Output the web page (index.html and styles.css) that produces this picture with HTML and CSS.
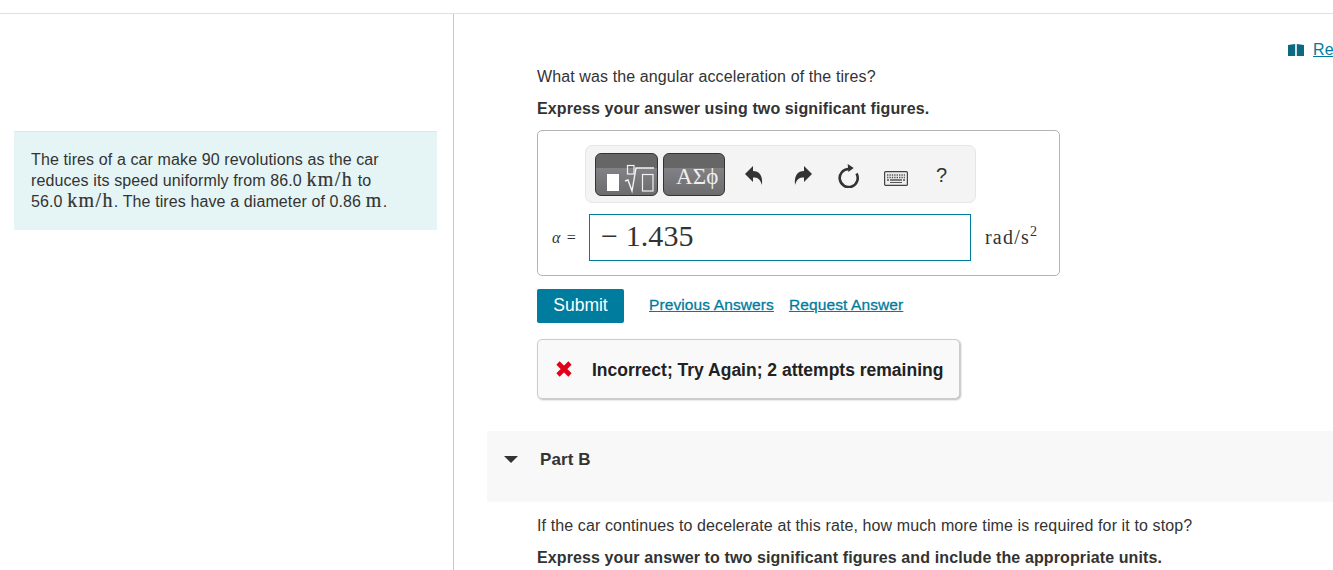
FILE: index.html
```html
<!DOCTYPE html>
<html>
<head>
    <title>Part A</title>
    <link rel="stylesheet" href="styles.css">
</head>
<body>
    <div class="page">
        <div class="left-col">
            <div class="statement">
                The tires of a car make 90 revolutions as the car<br>
                reduces its speed uniformly from 86.0 <span class="unit">km/h</span> to<br>
                56.0 <span class="unit">km/h</span>. The tires have a diameter of 0.86 <span class="unit">m</span>.
            </div>
        </div>
        <div class="right-col">
            <div class="review-row">
                <svg class="book" width="16" height="12" viewBox="0 0 16 12"><path d="M0 1l7.200-1v12H0zM8.800 0L16 1v11H8.800z" fill="#0b6a80"/></svg>
                <a class="review-link" href="#">Re</a>
            </div>
            <div class="part">
                <p class="question">What was the angular acceleration of the tires?</p>
                <p class="instruction">Express your answer using two significant figures.</p>

                <div class="answer-box">
                    <div class="toolbar">
                        <div class="tool-btn tool-templates">
                            <svg width="61" height="42" viewBox="0 0 61 42">
                                <rect x="11" y="20" width="12" height="17" fill="#fff"/>
                                <rect x="31.500" y="11.500" width="6.500" height="8.500" fill="none" stroke="#f2f2f2" stroke-width="1.200"/>
                                <path d="M29 27l3-1 4 11 4-23h18" fill="none" stroke="#f2f2f2" stroke-width="1.400"/>
                                <rect x="46.500" y="20.500" width="10.500" height="16.500" fill="none" stroke="#f2f2f2" stroke-width="1.200"/>
                            </svg>
                        </div>
                        <div class="tool-btn tool-greek">ΑΣϕ</div>
                        <svg class="icon icon-undo" width="18" height="19" viewBox="0 0 18 19"><path d="M0 8l8-8v5c6 0 10 4 9 14-2-6-4-7.500-9-7.500V16z" fill="#333"/></svg>
                        <svg class="icon icon-redo" width="18" height="19" viewBox="0 0 18 19"><path d="M18 8l-8-8v5c-6 0-10 4-9 14 2-6 4-7.500 9-7.500V16z" fill="#333"/></svg>
                        <svg class="icon icon-reset" width="22" height="24" viewBox="0 0 22 24"><path d="M10.700 5A9 9 0 1 0 18.500 9.500" fill="none" stroke="#333" stroke-width="2.600"/><path d="M9.700 0l6 4-5.400 4z" fill="#333"/></svg>
                        <svg class="icon icon-keyboard" width="24" height="15" viewBox="0 0 24 15">
                            <rect x=".6" y=".6" width="22.800" height="13.800" rx="1" fill="#eee" stroke="#444" stroke-width="1.200"/>
                            <path d="M3 4h18M3 6.500h18" stroke="#555" stroke-width="1.400" stroke-dasharray="1.400 1"/>
                            <path d="M3 9h2M6 9h12M19 9h2" stroke="#555" stroke-width="1.400"/>
                            <path d="M6 11.500h12" stroke="#555" stroke-width="1"/>
                        </svg>
                        <span class="tool-help">?</span>
                    </div>
                    <div class="answer-row">
                        <span class="answer-label"><i>α</i> =</span>
                        <div class="answer-input">− 1.435</div>
                        <span class="answer-unit">rad/s<sup>2</sup></span>
                    </div>
                </div>

                <div class="actions">
                    <button class="submit">Submit</button>
                    <a class="action-link first" href="#">Previous Answers</a>
                    <a class="action-link" href="#">Request Answer</a>
                </div>

                <div class="feedback">
                    <svg width="18" height="18" viewBox="0 0 18 18"><path d="M3 3l12 12M15 3L3 15" stroke="#e2001a" stroke-width="4.600"/></svg>
                    <span class="feedback-text">Incorrect; Try Again; 2 attempts remaining</span>
                </div>
            </div>

            <div class="part-bar">
                <span class="caret"></span>
                <span class="part-title">Part B</span>
            </div>

            <div class="part part-b">
                <p class="question">If the car continues to decelerate at this rate, how much more time is required for it to stop?</p>
                <p class="instruction">Express your answer to two significant figures and include the appropriate units.</p>
            </div>
        </div>
    </div>
</body>
</html>
```

FILE: styles.css
```css
html, body {
    margin: 0;
    height: 570px;
    overflow: hidden;
    background-color: white;
}
body {
    font-family: "Liberation Sans", Arial, sans-serif;
    font-size: 16px;
    letter-spacing: 0.11px;
    color: #333;
}
.page {
    display: flex;
    margin-top: 13px;
    border-top: 1px solid #e0e0e0;
    height: 556px;
}
.left-col {
    width: 454px;
    flex-shrink: 0;
    box-sizing: border-box;
    padding: 117px 16px 0 14px;
    border-right: 1px solid #c8c8c8;
}
.statement {
    height: 99px;
    box-sizing: border-box;
    background-color: #e5f5f6;
    border-top: 1px solid #dde6e8;
    padding: 17px 16px 0 17px;
    line-height: 21px;
    white-space: nowrap;
}
.unit {
    font-family: "Liberation Serif", serif;
    font-size: 20px;
    line-height: 0;
    letter-spacing: 1.4px;
    -webkit-text-stroke: 0.2px #333;
}
.right-col {
    flex: 1;
    min-width: 0;
    overflow: hidden;
}
.review-row {
    display: flex;
    align-items: center;
    padding: 26px 0 0 834px;
    height: 20px;
    white-space: nowrap;
}
.book {
    flex-shrink: 0;
}
.review-link {
    color: #007c9e;
    text-decoration: underline;
    margin-left: 5px;
    padding-left: 4px;
}
.part {
    padding: 0 0 0 83px;
}
.question {
    margin: 7px 0 0;
    line-height: 20px;
}
.instruction {
    margin: 12px 0 0;
    line-height: 20px;
    font-weight: bold;
}
.answer-box {
    box-sizing: border-box;
    width: 523px;
    height: 146px;
    margin-top: 11px;
    border: 1px solid #b3b3b3;
    border-radius: 5px;
    padding: 14px 0 0 13px;
}
.toolbar {
    display: flex;
    align-items: center;
    box-sizing: border-box;
    width: 391px;
    height: 58px;
    margin-left: 34px;
    padding-left: 9px;
    background-color: #f4f4f4;
    border: 1px solid #e6e6e6;
    border-radius: 7px;
}
.tool-btn {
    box-sizing: border-box;
    height: 43px;
    border: 1px solid #333;
    border-radius: 6px;
    background: linear-gradient(#666 0 14px, #828286 14px, #6c6c6f 100%);
    color: #eee;
    overflow: hidden;
}
.tool-templates {
    width: 63px;
}
.tool-templates svg {
    display: block;
}
.tool-greek {
    width: 62px;
    margin-left: 5px;
    padding: 10px 0 0 12px;
    font-family: "Liberation Serif", serif;
    font-size: 23px;
    line-height: 26px;
    white-space: nowrap;
}
.icon {
    flex-shrink: 0;
}
.icon-undo {
    margin: 2px 0 0 20px;
}
.icon-redo {
    margin: 2px 0 0 31px;
}
.icon-reset {
    margin: 3px 0 0 26px;
}
.icon-keyboard {
    margin: 9px 0 0 24px;
}
.tool-help {
    margin: 3px 0 0 28px;
    font-size: 20px;
    color: #333;
}
.answer-row {
    display: flex;
    align-items: center;
    margin-top: 11px;
}
.answer-label {
    font-family: "Liberation Serif", serif;
    font-size: 16px;
    letter-spacing: 1.2px;
    width: 37px;
    padding-left: 1px;
}
.answer-input {
    box-sizing: border-box;
    width: 382px;
    height: 47px;
    border: 1px solid #007c9e;
    padding-left: 11px;
    font-family: "Liberation Serif", serif;
    font-size: 30px;
    line-height: 41px;
    white-space: pre;
}
.answer-unit {
    margin-left: 14px;
    font-family: "Liberation Serif", serif;
    font-size: 20px;
    letter-spacing: 1.2px;
}
.answer-unit sup {
    font-size: 14px;
    line-height: 0;
}
.actions {
    display: flex;
    align-items: center;
    margin-top: 13px;
    height: 34px;
}
.submit {
    width: 87px;
    height: 34px;
    padding: 0 0 2px;
    border: none;
    border-radius: 2px;
    background-color: #007c9e;
    color: white;
    font-family: "Liberation Sans", Arial, sans-serif;
    font-size: 17.500px;
}
.action-link {
    margin: -3px 0 0 15px;
    color: #007c9e;
    font-size: 15.500px;
    -webkit-text-stroke: 0.3px #007c9e;
}
.action-link.first {
    margin-left: 25px;
}
.feedback {
    display: inline-flex;
    align-items: center;
    gap: 19px;
    box-sizing: border-box;
    height: 60px;
    width: 423px;
    margin-top: 16px;
    padding-left: 17px;
    background-color: #f9f9f9;
    border: 1px solid #ccc;
    border-radius: 5px;
    box-shadow: 1px 1px 2px #bbb;
    font-size: 17.500px;
    letter-spacing: 0;
    font-weight: bold;
    color: #222;
    white-space: nowrap;
}
.feedback-text {
    padding-top: 2px;
}
.part-bar {
    display: flex;
    align-items: flex-start;
    height: 71px;
    margin: 32px 0 0 33px;
    background-color: #f8f8f8;
    padding-top: 19px;
    box-sizing: border-box;
}
.caret {
    width: 0;
    height: 0;
    margin: 6px 0 0 17px;
    border-left: 7px solid transparent;
    border-right: 7px solid transparent;
    border-top: 7px solid #333;
}
.part-title {
    margin-left: 22px;
    font-size: 17px;
    font-weight: bold;
    line-height: 20px;
}
.part-b .question {
    margin-top: 14px;
}
```
